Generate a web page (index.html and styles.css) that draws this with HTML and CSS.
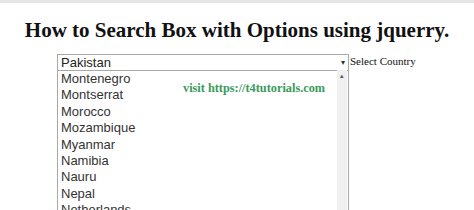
FILE: index.html
```
<!DOCTYPE html>
<html>
<head>
<meta charset="utf-8">
<link rel="stylesheet" href="styles.css">
</head>
<body>
<div class="topbar"></div>
<h1 class="title">How to Search Box with Options using jquerry.</h1>
<div class="row">
  <div class="combo">
    <div class="select-box">
      <span class="value">Pakistan</span>
      <span class="arrow">&#9662;</span>
    </div>
    <div class="dropdown">
      <ul class="options">
        <li>Montenegro</li>
        <li>Montserrat</li>
        <li>Morocco</li>
        <li>Mozambique</li>
        <li>Myanmar</li>
        <li>Namibia</li>
        <li>Nauru</li>
        <li>Nepal</li>
        <li>Netherlands</li>
      </ul>
      <div class="scrollbar"><span class="up">&#9652;</span></div>
    </div>
  </div>
  <span class="label">Select Country</span>
</div>
<p class="visit">visit https://t4tutorials.com</p>
</body>
</html>
```
FILE: styles.css
```
html, body {
  margin: 0;
  padding: 0;
  background: #fff;
  overflow: hidden;
}
body {
  width: 474px;
  height: 210px;
  font-family: "Liberation Serif", "Times New Roman", serif;
  color: #111;
}
.topbar {
  height: 3px;
  background: #e6e6e6;
}
.title {
  margin: 14px 0 0 0;
  text-align: center;
  font-size: 21px;
  line-height: 26px;
  font-weight: bold;
}
.row {
  display: flex;
  align-items: flex-start;
  margin: 11px 0 0 57px;
}
.combo {
  position: relative;
  width: 292px;
}
.select-box {
  box-sizing: border-box;
  height: 17px;
  border: 1px solid #a9a9a9;
  display: flex;
  align-items: center;
  justify-content: space-between;
  padding: 0 3px 0 3px;
  font-family: "Liberation Sans", Arial, sans-serif;
  font-size: 13px;
  color: #222;
}
.arrow {
  font-size: 8px;
  color: #333;
}
.label {
  font-size: 11px;
  line-height: 14px;
  margin-left: 1px;
  color: #111;
}
.dropdown {
  position: absolute;
  left: 0;
  top: 16px;
  width: 292px;
  height: 160px;
  box-sizing: border-box;
  border-left: 1px solid #a9a9a9;
  border-right: 1px solid #a9a9a9;
  background: transparent;
  display: flex;
}
.options {
  list-style: none;
  margin: 0;
  padding: 1px 0 0 3px;
  flex: 1;
  font-family: "Liberation Sans", Arial, sans-serif;
  font-size: 13px;
  line-height: 16.4px;
  color: #333;
}
.scrollbar {
  width: 10px;
  margin-right: 1px;
  background: #f0f0f0;
  display: flex;
  justify-content: center;
}
.up {
  font-size: 7px;
  line-height: 12px;
  color: #555;
}
.visit {
  margin: 10px 0 0 183px;
  font-size: 12.3px;
  font-weight: bold;
  color: #3a9a5c;
}
```
